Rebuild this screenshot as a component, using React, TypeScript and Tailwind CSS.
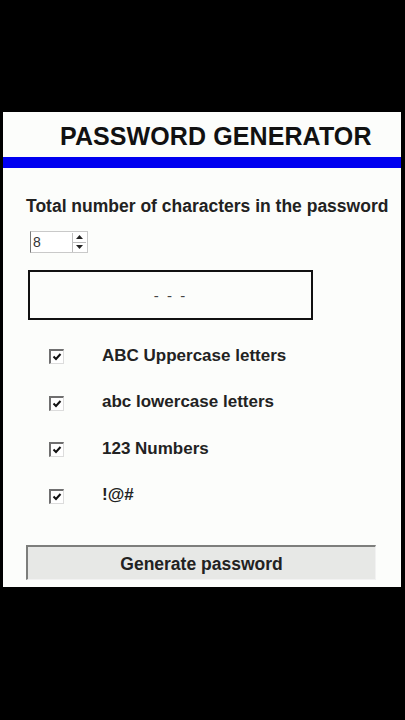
import {useState} from 'react';

const options = [
    {id: 'upper', label: 'ABC Uppercase letters'},
    {id: 'lower', label: 'abc lowercase letters'},
    {id: 'numbers', label: '123 Numbers'},
    {id: 'symbols', label: '!@#'},
];

function CheckBox({checked, onToggle}: {checked: boolean; onToggle: () => void}) {
    return (
        <button
            type="button"
            onClick={onToggle}
            className="w-[15px] h-[15px] flex items-center justify-center bg-white border-t-2 border-l-2 border-t-[#6f6f6f] border-l-[#6f6f6f] border-b border-r border-b-[#dcdcdc] border-r-[#dcdcdc]"
        >
            {checked && (
                <svg viewBox="0 0 10 10" className="w-[10px] h-[10px]">
                    <path d="M1.5 4.5 L4 7 L8.5 2" fill="none" stroke="#111" strokeWidth="2"/>
                </svg>
            )}
        </button>
    );
}

export default function App() {
    const [length, setLength] = useState(8);
    const [checked, setChecked] = useState<Record<string, boolean>>({
        upper: true, lower: true, numbers: true, symbols: true,
    });

    return (
        <div className="h-[720px] bg-black pt-[112px] font-['Liberation_Sans',Arial,sans-serif]">
            <div className="ml-[3px] w-[398px] h-[475px] bg-[#fcfdfb] flex flex-col">

                {/* Header */}
                <div className="h-[45px] flex items-center pl-[57px] pt-[3px]">
                    <h1 className="text-[25px] leading-none font-bold text-[#111] tracking-[0.1px]">PASSWORD GENERATOR</h1>
                </div>
                <div className="h-[11px] bg-[#0000f0]"></div>

                <div className="pt-[28px] pl-[23px]">
                    <p className="text-[17.5px] leading-[20px] font-bold text-[#222]">
                        Total number of characters in the password
                    </p>

                    {/* Length input */}
                    <div className="mt-[15px] ml-[4px] w-[58px] h-[22px] flex items-center bg-white border border-[#c9c9c9] border-l-[#7a7a7a]">
                        <span className="flex-1 pl-[2px] text-[14px] text-[#333]">{length}</span>
                        <div className="w-[14px] h-[19px] mr-[1px] flex flex-col border-l border-[#bdbdbd]">
                            <button type="button" onClick={() => setLength(length + 1)}
                                    className="flex-1 flex items-center justify-center border-b border-[#bdbdbd]">
                                <svg viewBox="0 0 7 4" className="w-[7px] h-[4px]"><path d="M0 4 L3.5 0 L7 4 Z" fill="#222"/></svg>
                            </button>
                            <button type="button" onClick={() => setLength(Math.max(1, length - 1))}
                                    className="flex-1 flex items-center justify-center">
                                <svg viewBox="0 0 7 4" className="w-[7px] h-[4px]"><path d="M0 0 L3.5 4 L7 0 Z" fill="#222"/></svg>
                            </button>
                        </div>
                    </div>

                    {/* Output */}
                    <div className="mt-[17px] ml-[2px] w-[285px] h-[50px] border-2 border-[#111] flex items-center justify-center">
                        <span className="text-[15px] text-[#444] tracking-[2px] pt-[3px]">- - -</span>
                    </div>
                </div>

                {/* Options */}
                <div className="mt-[12px] flex flex-col">
                    {options.map((o) => (
                        <div key={o.id} className="h-[46.5px] flex items-center">
                            <div className="w-[99px] pl-[46px] flex items-center pt-[3px]">
                                <CheckBox checked={checked[o.id]}
                                          onToggle={() => setChecked({...checked, [o.id]: !checked[o.id]})}/>
                            </div>
                            <span className="text-[17px] font-bold text-[#222]">{o.label}</span>
                        </div>
                    ))}
                </div>

                <button
                    type="button"
                    className="mt-[27px] ml-[23px] w-[350px] h-[35px] pt-[3px] bg-[#e7e8e6] border-t-2 border-l-2 border-t-[#7d7e7c] border-l-[#7d7e7c] border-b border-r border-b-[#f2f2f2] border-r-[#f2f2f2] text-[17.5px] font-bold text-[#222]"
                >
                    Generate password
                </button>
            </div>
        </div>
    );
}
